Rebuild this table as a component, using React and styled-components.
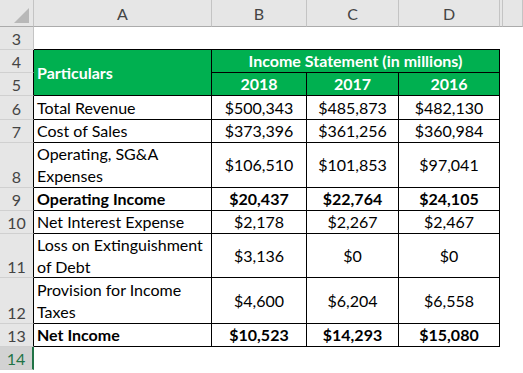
import React from 'react';
import styled, { createGlobalStyle } from 'styled-components';

const GlobalStyle = createGlobalStyle`
  html, body {
    margin: 0;
    padding: 0;
    background: #fff;
  }
`;

const Sheet = styled.div`
  display: grid;
  grid-template-columns: 34px 178px 95px 92px 101px 3px 1fr;
  grid-template-rows: 27px 23px 23px 23px 24px 23px 45px 23px 23px 44px 46px 23px 23px 1fr;
  width: 523px;
  height: 373px;
  overflow: hidden;
  font-family: Lato, 'Liberation Sans', sans-serif;
  font-size: 16px;
  color: #000;
`;

const Corner = styled.div`
  box-sizing: border-box;
  background: #e6e6e6;
  border-right: 1px solid #c4c4c4;
  border-bottom: 1px solid #ababab;
  display: flex;
  align-items: flex-end;
  justify-content: flex-end;
  padding: 0 3px 2px 0;
`;

const ColHead = styled.div`
  box-sizing: border-box;
  background: #e6e6e6;
  border-right: 1px solid #c4c4c4;
  border-bottom: 1px solid #ababab;
  display: flex;
  align-items: center;
  justify-content: center;
  color: #444;
  padding-top: 1px;
`;

const RowHead = styled.div`
  box-sizing: border-box;
  grid-column: 1;
  background: ${(p) => (p.$active ? '#d2d2d2' : '#e6e6e6')};
  border-bottom: 1px solid #d0d0d0;
  border-right: ${(p) =>
    p.$active ? '2px solid #217346' : `1px solid ${p.$table ? '#000' : '#c4c4c4'}`};
  color: ${(p) => (p.$active ? '#217346' : '#444')};
  display: flex;
  align-items: flex-end;
  justify-content: center;
  padding-bottom: 1px;
`;

const Blank = styled.div`
  box-sizing: border-box;
  grid-column: span ${(p) => p.$span || 1};
  border-bottom: ${(p) => (p.$edge ? '1px solid #000' : 'none')};
`;

const Cell = styled.div`
  box-sizing: border-box;
  grid-column: span ${(p) => p.$span || 1};
  grid-row: span ${(p) => p.$rows || 1};
  border-right: 1px solid #000;
  border-bottom: 1px solid #000;
  background: ${(p) => (p.$head ? '#00b050' : '#fff')};
  color: ${(p) => (p.$head ? '#fff' : '#000')};
  font-weight: ${(p) => (p.$bold || p.$head ? 700 : 400)};
  display: flex;
  align-items: center;
  justify-content: ${(p) => (p.$center ? 'center' : 'flex-start')};
  text-align: ${(p) => (p.$center ? 'center' : 'left')};
  padding: 0 3px;
  line-height: 22px;
  white-space: nowrap;
`;

const Filler = styled.div`
  grid-column: span 2;
`;

const rows = [
  { n: 6, label: 'Total Revenue', v: ['$500,343', '$485,873', '$482,130'] },
  { n: 7, label: 'Cost of Sales', v: ['$373,396', '$361,256', '$360,984'] },
  { n: 8, label: ['Operating, SG&A', 'Expenses'], v: ['$106,510', '$101,853', '$97,041'] },
  { n: 9, label: 'Operating Income', v: ['$20,437', '$22,764', '$24,105'], bold: true },
  { n: 10, label: 'Net Interest Expense', v: ['$2,178', '$2,267', '$2,467'] },
  { n: 11, label: ['Loss on Extinguishment', 'of Debt'], v: ['$3,136', '$0', '$0'] },
  { n: 12, label: ['Provision for Income', 'Taxes'], v: ['$4,600', '$6,204', '$6,558'] },
  { n: 13, label: 'Net Income', v: ['$10,523', '$14,293', '$15,080'], bold: true },
];

function CornerMark() {
  return (
    <svg width="16" height="16" viewBox="0 0 16 16">
      <polygon points="0,15 15,15 15,0" fill="#b8b8b8" />
    </svg>
  );
}

export default function App() {
  return (
    <>
      <GlobalStyle />
      <Sheet>
        <Corner>
          <CornerMark />
        </Corner>
        <ColHead>A</ColHead>
        <ColHead>B</ColHead>
        <ColHead>C</ColHead>
        <ColHead>D</ColHead>
        <ColHead />
        <ColHead />

        <RowHead>3</RowHead>
        <Blank $edge $span={4} />
        <Filler />

        <RowHead $table>4</RowHead>
        <Cell $head $rows={2}>Particulars</Cell>
        <Cell $head $center $span={3}>Income Statement (in millions)</Cell>
        <Filler />

        <RowHead $table>5</RowHead>
        <Cell $head $center>2018</Cell>
        <Cell $head $center>2017</Cell>
        <Cell $head $center>2016</Cell>
        <Filler />

        {rows.map((r) => (
          <React.Fragment key={r.n}>
            <RowHead $table>{r.n}</RowHead>
            <Cell $bold={r.bold}>
              {Array.isArray(r.label) ? (
                <span>
                  {r.label[0]}
                  <br />
                  {r.label[1]}
                </span>
              ) : (
                r.label
              )}
            </Cell>
            {r.v.map((val, i) => (
              <Cell key={i} $center $bold={r.bold}>
                {val}
              </Cell>
            ))}
            <Filler />
          </React.Fragment>
        ))}

        <RowHead $active>14</RowHead>
      </Sheet>
    </>
  );
}
